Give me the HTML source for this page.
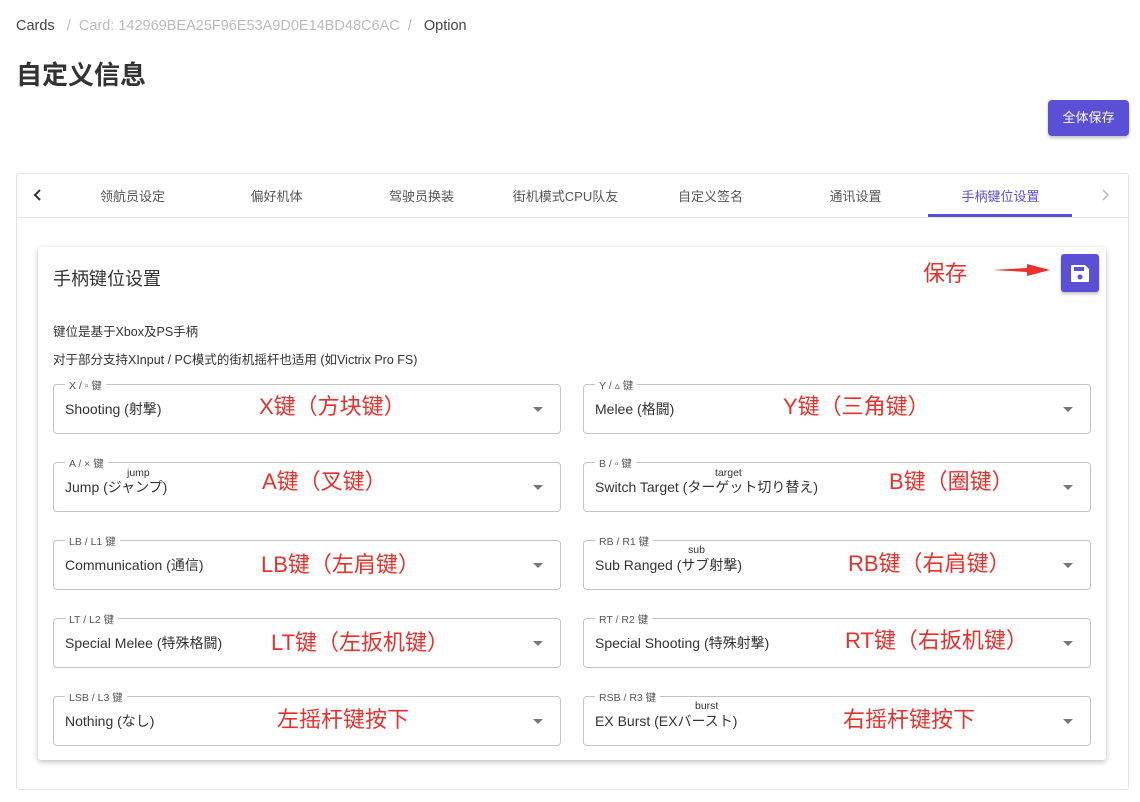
<!DOCTYPE html>
<html><head><meta charset="utf-8"><style>
*{box-sizing:border-box;margin:0;padding:0}
body{width:1140px;height:802px;background:#fff;font-family:"Liberation Sans","Noto Sans CJK SC",sans-serif;color:#333;position:relative;overflow:hidden}
.a{position:absolute;white-space:nowrap}
.crumb{left:16px;top:18px;font-size:14.5px;color:#444}
.crumb .g{color:#bbb}
.title{left:16px;top:55px;font-size:26px;font-weight:bold;color:#333}
.btn{left:1048px;top:100px;width:81px;height:36px;background:#5b4fd6;border-radius:4px;color:#fff;font-size:13px;line-height:36px;text-align:center;box-shadow:0 2px 3px rgba(0,0,0,.25)}
.outer{left:16px;top:173px;width:1113px;height:617px;border:1px solid #e3e3e3;border-radius:3px}
.tabline{left:17px;top:217px;width:1111px;height:1px;background:#e3e3e3}
.tab{top:186px;font-size:13px;color:#555;width:145px;text-align:center}
.act{color:#5b4fd6}
.under{left:928px;top:214px;width:144px;height:3px;background:#5b4fd6}
.inner{left:38px;top:247px;width:1068px;height:513px;background:#fff;border-radius:3px;box-shadow:0 2px 6px rgba(0,0,0,.25)}
.h{left:53px;top:265px;font-size:18px;color:#333}
.save{left:1061px;top:254px;width:38px;height:38px;background:#5b4fd6;border-radius:3px;box-shadow:0 2px 3px rgba(0,0,0,.25)}
.red{color:#e8302c;font-size:22px}
.txt{font-size:12.5px;color:#333}
.f{width:508px;height:50px;border:1px solid #c4c4c4;border-radius:4px}
.lab{font-size:10.5px;color:#555;background:#fff;padding:0 4px;top:-7px;left:11px;position:absolute}
.val{position:absolute;left:11px;top:14px;font-size:14px;color:#333}
.arr{position:absolute;right:17px;top:22px;width:0;height:0;border-left:5px solid transparent;border-right:5px solid transparent;border-top:5px solid #777}
.rb{font-size:10.5px;color:#333}
</style></head><body>
<div class="a crumb">Cards &nbsp;<span class="g"> / &nbsp;Card: 142969BEA25F96E53A9D0E14BD48C6AC&nbsp; / </span>&nbsp; Option</div>
<div class="a title">自定义信息</div>
<div class="a btn">全体保存</div>
<div class="a outer"></div>
<div class="a tabline"></div>
<svg class="a" style="left:32px;top:188px" width="12" height="14"><path d="M8 2 L3 7 L8 12" stroke="#333" stroke-width="2" fill="none"/></svg>
<div class="a tab" style="left:60px">领航员设定</div>
<div class="a tab" style="left:204px">偏好机体</div>
<div class="a tab" style="left:349px">驾驶员换装</div>
<div class="a tab" style="left:493px">街机模式CPU队友</div>
<div class="a tab" style="left:638px">自定义签名</div>
<div class="a tab" style="left:783px">通讯设置</div>
<div class="a tab act" style="left:928px">手柄键位设置</div>
<svg class="a" style="left:1100px;top:188px" width="12" height="14"><path d="M3 2 L8 7 L3 12" stroke="#bbb" stroke-width="1.5" fill="none"/></svg>
<div class="a under"></div>
<div class="a inner"></div>
<div class="a h">手柄键位设置</div>
<div class="a red" style="left:923px;top:256px">保存</div>
<svg class="a" style="left:992px;top:264px" width="60" height="12"><polygon points="0,6 35,4 35,0 58,6 35,12 35,8" fill="#e8302c"/></svg>
<div class="a save"><svg width="38" height="38" viewBox="0 0 38 38"><path d="M11 11h13l4 4v12a1 1 0 0 1-1 1H11a1 1 0 0 1-1-1V12a1 1 0 0 1 1-1z" fill="#fff"/><rect x="13" y="13" width="10" height="4" fill="#5b4fd6"/><circle cx="19" cy="23" r="2.5" fill="#5b4fd6"/></svg></div>
<div class="a txt" style="left:53px;top:321px">键位是基于Xbox及PS手柄</div>
<div class="a txt" style="left:53px;top:349px">对于部分支持XInput / PC模式的街机摇杆也适用 (如Victrix Pro FS)</div>

<div class="a f" style="left:53px;top:384px"><span class="lab">X / ▫ 键</span><span class="val">Shooting (射撃)</span><i class="arr"></i></div>
<div class="a f" style="left:583px;top:384px"><span class="lab">Y / ▵ 键</span><span class="val">Melee (格闘)</span><i class="arr"></i></div>
<div class="a f" style="left:53px;top:462px"><span class="lab">A / × 键</span><span class="val">Jump (ジャンプ)</span><i class="arr"></i></div>
<div class="a f" style="left:583px;top:462px"><span class="lab">B / ▫ 键</span><span class="val">Switch Target (ターゲット切り替え)</span><i class="arr"></i></div>
<div class="a f" style="left:53px;top:540px"><span class="lab">LB / L1 键</span><span class="val">Communication (通信)</span><i class="arr"></i></div>
<div class="a f" style="left:583px;top:540px"><span class="lab">RB / R1 键</span><span class="val">Sub Ranged (サブ射撃)</span><i class="arr"></i></div>
<div class="a f" style="left:53px;top:618px"><span class="lab">LT / L2 键</span><span class="val">Special Melee (特殊格闘)</span><i class="arr"></i></div>
<div class="a f" style="left:583px;top:618px"><span class="lab">RT / R2 键</span><span class="val">Special Shooting (特殊射撃)</span><i class="arr"></i></div>
<div class="a f" style="left:53px;top:696px"><span class="lab">LSB / L3 键</span><span class="val">Nothing (なし)</span><i class="arr"></i></div>
<div class="a f" style="left:583px;top:696px"><span class="lab">RSB / R3 键</span><span class="val">EX Burst (EXバースト)</span><i class="arr"></i></div>

<div class="a rb" style="left:127px;top:467px">jump</div>
<div class="a rb" style="left:715px;top:467px">target</div>
<div class="a rb" style="left:688px;top:544px">sub</div>
<div class="a rb" style="left:695px;top:700px">burst</div>

<div class="a red" style="left:259px;top:389px">X键（方块键）</div>
<div class="a red" style="left:783px;top:389px">Y键（三角键）</div>
<div class="a red" style="left:262px;top:464px">A键（叉键）</div>
<div class="a red" style="left:889px;top:464px">B键（圈键）</div>
<div class="a red" style="left:261px;top:547px">LB键（左肩键）</div>
<div class="a red" style="left:848px;top:546px">RB键（右肩键）</div>
<div class="a red" style="left:271px;top:625px">LT键（左扳机键）</div>
<div class="a red" style="left:845px;top:623px">RT键（右扳机键）</div>
<div class="a red" style="left:277px;top:702px">左摇杆键按下</div>
<div class="a red" style="left:843px;top:702px">右摇杆键按下</div>
</body></html>
